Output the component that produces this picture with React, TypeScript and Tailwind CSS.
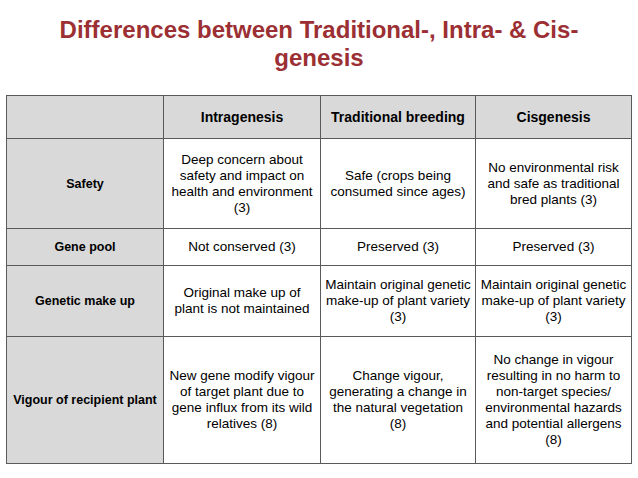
import React from "react";

const COLS = ["Intragenesis", "Traditional breeding", "Cisgenesis"];

// lines broken as in the slide
const ROWS = [
  {
    label: "Safety",
    h: "h-[89px]",
    cells: [
      ["Deep concern about", "safety and impact on", "health and environment", "(3)"],
      ["Safe (crops being", "consumed since ages)"],
      ["No environmental risk", "and safe as traditional", "bred plants (3)"],
    ],
  },
  {
    label: "Gene pool",
    h: "h-[36px]",
    cells: [["Not conserved (3)"], ["Preserved (3)"], ["Preserved (3)"]],
  },
  {
    label: "Genetic make up",
    h: "h-[70px]",
    cells: [
      ["Original make up of", "plant is not maintained"],
      ["Maintain original genetic", "make-up of plant variety", "(3)"],
      ["Maintain original genetic", "make-up of plant variety", "(3)"],
    ],
  },
  {
    label: "Vigour of recipient plant",
    h: "h-[126px]",
    cells: [
      ["New gene modify vigour", "of target plant due to", "gene influx from its wild", "relatives (8)"],
      ["Change vigour,", "generating a change in", "the natural vegetation", "(8)"],
      [
        "No change in vigour",
        "resulting in no harm to",
        "non-target species/",
        "environmental hazards",
        "and potential allergens",
        "(8)",
      ],
    ],
  },
];

export default function App() {
  return (
    <div
      className="w-[638px] h-[478px] bg-white overflow-hidden"
      style={{ fontFamily: '"Liberation Sans", Arial, sans-serif' }}
    >
      <h1 className="pt-[16px] px-10 text-center text-[24px] leading-[28px] font-bold text-[#9b2f33]">
        Differences between Traditional-, Intra- &amp; Cis-genesis
      </h1>

      <div className="mt-[23px] ml-[6px] w-[626px] grid grid-cols-[156px_156px_154px_155px] gap-px bg-[#5a5a5a] p-px text-[13.5px] leading-[16px] text-black">
        <div className="h-[42px] bg-[#d9d9d9]" />
        {COLS.map((c) => (
          <div key={c} className="h-[42px] bg-[#d9d9d9] flex items-center justify-center font-bold text-[14px]">
            {c}
          </div>
        ))}

        {ROWS.map((r) => (
          <React.Fragment key={r.label}>
            <div className={`${r.h} bg-[#d9d9d9] flex items-center justify-center text-center font-bold text-[12.5px] px-1`}>
              {r.label}
            </div>
            {r.cells.map((lines, i) => (
              <div key={i} className={`${r.h} bg-white flex flex-col items-center justify-center text-center whitespace-nowrap`}>
                {lines.map((l) => (
                  <span key={l}>{l}</span>
                ))}
              </div>
            ))}
          </React.Fragment>
        ))}
      </div>
    </div>
  );
}
